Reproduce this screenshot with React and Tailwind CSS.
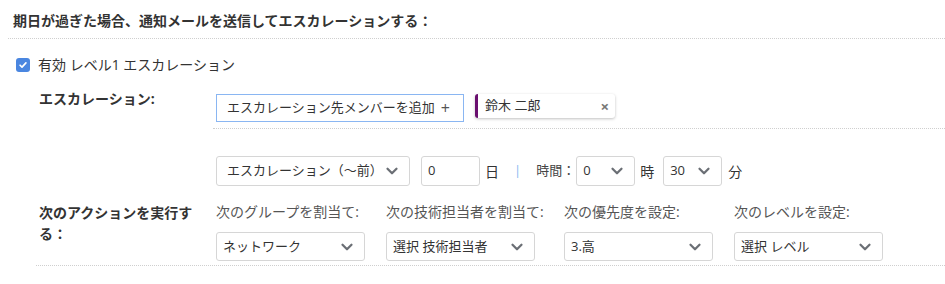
import { ChevronDown } from 'lucide-react'

const FONT = { fontFamily: '"Open Sans", "Noto Sans CJK JP", sans-serif' }

function Select({ value, className = '' }) {
  return (
    <div
      className={`shrink-0 flex items-center justify-between border border-[#d6d6d6] rounded-[3px] bg-white pl-[10px] pr-[8px] text-[13px] text-[#333] whitespace-nowrap ${className}`}
    >
      <span>{value}</span>
      <ChevronDown className="shrink-0 w-[18px] h-[18px] text-[#6b6f75]" strokeWidth={3} />
    </div>
  )
}

function Field({ label, value, className = '' }) {
  return (
    <div className={`shrink-0 w-[149px] flex flex-col ${className}`}>
      <span className="text-[14px] text-[#555] leading-[18px] h-[18px] mt-[3px] whitespace-nowrap">{label}</span>
      <Select value={value} className="w-[149px] h-[29px] mt-[11px] !pl-[6px]" />
    </div>
  )
}

export default function App() {
  return (
    <div style={FONT} className="w-[945px] h-[284px] bg-white text-[#333] overflow-hidden">
      <div className="pl-[8px] pt-[12px]">
        <div className="pl-[5px] text-[14px] font-bold text-[#333] leading-[18px]">
          期日が過ぎた場合、通知メールを送信してエスカレーションする：
        </div>
        <div className="mt-[8px] border-b border-dotted border-[#cfcfcf]" />
      </div>

      <div className="flex items-center pl-[16px] mt-[17px]">
        <div className="w-[14px] h-[14px] rounded-[3px] bg-[#4a86e0] flex items-center justify-center">
          <svg viewBox="0 0 12 12" className="w-[10px] h-[10px]" fill="none" stroke="white" strokeWidth="2" strokeLinecap="round" strokeLinejoin="round">
            <path d="M2.5 6.3l2.3 2.2 4.7-5" />
          </svg>
        </div>
        <span className="ml-[8px] text-[14px] text-[#333] leading-[18px]">有効 レベル1 エスカレーション</span>
      </div>

      <div className="pl-[36px] mt-[20px]">
        <div className="flex">
          <div className="shrink-0 w-[180px] pl-[3px] -mt-[4px] text-[14px] font-bold leading-[18px] text-[#333]">
            エスカレーション:
          </div>
          <div className="flex-1">
            <div className="flex items-start">
              <div className="shrink-0 h-[28px] w-[248px] border border-[#8ab6f2] bg-white flex items-center pl-[10px] text-[13px] text-[#333] whitespace-nowrap">
                エスカレーション先メンバーを追加
                <span className="ml-[6px] text-[16px] text-[#555] leading-none">+</span>
              </div>
              <div className="shrink-0 ml-[11px] h-[24px] w-[140px] bg-white rounded-[3px] shadow-[0_1px_3px_rgba(0,0,0,0.25)] border-l-[3px] border-[#6a0f6f] flex items-center justify-between pl-[7px] pr-[6px] text-[13px] text-[#333]">
                <span>鈴木 二郎</span>
                <span className="text-[#777] text-[15px] font-bold leading-none">×</span>
              </div>
            </div>
            <div className="mt-[6px] -ml-[3px] border-b border-dotted border-[#cfcfcf]" />
            <div className="flex items-center mt-[27px] text-[13px] whitespace-nowrap">
              <Select value="エスカレーション（～前）" className="w-[194px] h-[30px]" />
              <div className="shrink-0 ml-[11px] w-[59px] h-[30px] border border-[#d6d6d6] rounded-[3px] flex items-center pl-[6px]">0</div>
              <span className="ml-[5px] text-[14px]">日</span>
              <span className="ml-[15px] text-[#8ab6f2]">|</span>
              <span className="ml-[15px] text-[#444]">時間：</span>
              <Select value="0" className="ml-[1px] w-[59px] h-[30px] !pl-[6px]" />
              <span className="ml-[5px] text-[14px]">時</span>
              <Select value="30" className="ml-[9px] w-[59px] h-[30px] !pl-[6px]" />
              <span className="ml-[6px] text-[14px]">分</span>
            </div>
          </div>
        </div>

        <div className="flex mt-[14px]">
          <div className="shrink-0 w-[180px] pl-[3px] pt-[2px] text-[14px] font-bold leading-[21px] text-[#333]">
            次のアクションを実行す
            <br />
            る：
          </div>
          <div className="flex">
            <Field label="次のグループを割当て:" value="ネットワーク" />
            <Field className="ml-[21px]" label="次の技術担当者を割当て:" value="選択 技術担当者" />
            <Field className="ml-[29px]" label="次の優先度を設定:" value="3.高" />
            <Field className="ml-[21px]" label="次のレベルを設定:" value="選択 レベル" />
          </div>
        </div>
        <div className="mt-[4px] border-b border-dotted border-[#cfcfcf]" />
      </div>
    </div>
  )
}
